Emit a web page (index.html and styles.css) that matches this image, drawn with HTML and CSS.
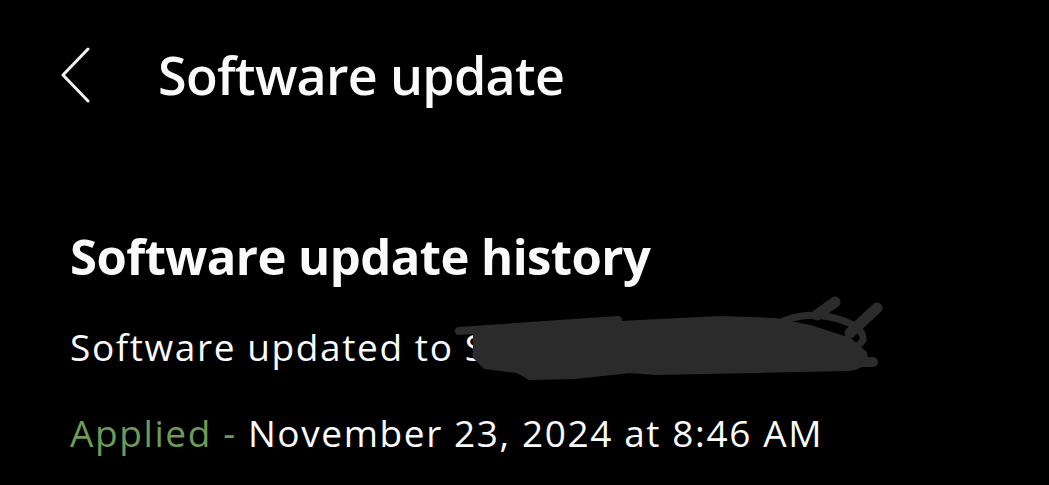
FILE: index.html
```html
<!DOCTYPE html>
<html lang="en">
<head>
<meta charset="UTF-8" />
<meta name="viewport" content="width=device-width, initial-scale=1" />
<title>Software update</title>
<link rel="stylesheet" href="styles.css">
</head>
<body>
  <div class="page">
    <header class="appbar">
      <button class="back-btn" aria-label="Back">
        <svg width="30" height="56" viewBox="0 0 30 56">
          <polyline points="27,2 2,28 27,54" fill="none" stroke="#f2f2f2" stroke-width="3" stroke-linecap="round" stroke-linejoin="round" />
        </svg>
      </button>
      <h1 class="appbar-title">Software update</h1>
    </header>

    <section class="history">
      <h2 class="history-title">Software update history</h2>
      <p class="history-line redacted">
        Software updated to S
        <!-- rabisco por cima da versão -->
        <svg class="scribble" width="430" height="90" viewBox="0 0 430 90" aria-hidden="true">
          <g fill="#2b2b2b" stroke="#2b2b2b" stroke-linecap="round" stroke-linejoin="round">
            <polygon stroke-width="4" points="20,40 60,32 165,28 265,23 320,25 355,32 395,45 410,58 412,68 395,74 300,76 200,78 175,76 120,82 75,83 62,76 30,72 20,62" />
            <line x1="4" y1="36" x2="163" y2="25" stroke-width="8" />
            <line x1="70" y1="72" x2="400" y2="70" stroke-width="10" />
            <path d="M308 37 Q340 15 375 22 Q410 30 408 45 Q400 58 375 58" fill="none" stroke-width="7" />
            <line x1="362" y1="20" x2="380" y2="7" stroke-width="11" />
            <line x1="395" y1="38" x2="422" y2="13" stroke-width="11" />
            <line x1="365" y1="67" x2="418" y2="67" stroke-width="10" />
          </g>
        </svg>
      </p>
      <p class="history-line"><span class="status">Applied -</span> November 23, 2024 at 8:46 AM</p>
    </section>
  </div>
</body>
</html>
```

FILE: styles.css
```css
body {
  margin: 0;
  height: 100vh;
  background-color: #000;
  color: #fafafa;
  font-family: "Open Sans", "Liberation Sans", sans-serif;
  overflow: hidden;
}

.page {
  padding-top: 45px;
}

/* Barra superior */
.appbar {
  display: flex;
  align-items: center;
  height: 60px;
  padding-left: 61px;
  gap: 67px;
}
.back-btn {
  display: flex;
  padding: 0;
  border: none;
  background: none;
  cursor: pointer;
}
.appbar-title {
  margin: 0;
  font-size: 52px;
  line-height: 60px;
  font-weight: 600;
  letter-spacing: -0.7px;
}

/* Histórico */
.history {
  margin-top: 123px;
  padding-left: 70px;
}
.history-title {
  margin: 0 0 41px;
  font-size: 49px;
  line-height: 56px;
  font-weight: 700;
  letter-spacing: -0.55px;
}
.history-line {
  margin: 0 0 42px;
  font-size: 37px;
  line-height: 44px;
  letter-spacing: 1.6px;
  white-space: nowrap;
}
.redacted {
  position: relative;
}
.scribble {
  position: absolute;
  left: 385px;
  top: -30px;
}
.status {
  color: #6f9b55;
}
```
